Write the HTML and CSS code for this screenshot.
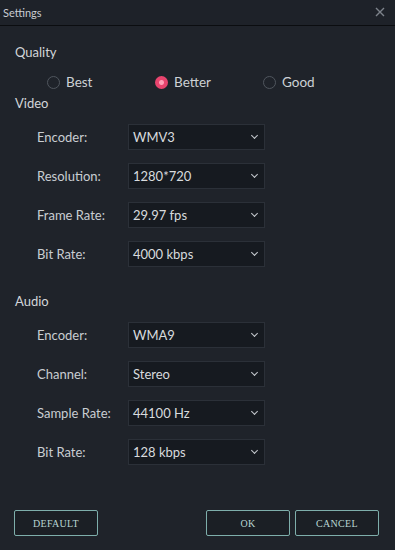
FILE: index.html
```html
<!DOCTYPE html>
<html lang="en">
<head>
  <meta charset="UTF-8" />
  <title>Settings</title>
  <link rel="stylesheet" href="styles.css">
</head>
<body>

  <!-- title bar -->
  <header class="titlebar">
    <span class="title">Settings</span>
    <span class="close">
      <svg width="10" height="10" viewBox="0 0 10 10"><path d="M1 1 L9 9 M9 1 L1 9" stroke="#7d838b" stroke-width="1.4" fill="none"/></svg>
    </span>
  </header>

  <main class="content">
    <div class="section">Quality</div>
    <div class="radios">
      <label class="radio"><span class="dot"></span>Best</label>
      <label class="radio checked"><span class="dot"></span>Better</label>
      <label class="radio"><span class="dot"></span>Good</label>
    </div>

    <div class="section video">Video</div>
    <div class="rows">
      <div class="row"><span class="label">Encoder:</span><div class="select">WMV3<i class="chev"></i></div></div>
      <div class="row"><span class="label">Resolution:</span><div class="select">1280*720<i class="chev"></i></div></div>
      <div class="row"><span class="label">Frame Rate:</span><div class="select">29.97 fps<i class="chev"></i></div></div>
      <div class="row"><span class="label">Bit Rate:</span><div class="select">4000 kbps<i class="chev"></i></div></div>
    </div>

    <div class="section audio">Audio</div>
    <div class="rows">
      <div class="row"><span class="label">Encoder:</span><div class="select">WMA9<i class="chev"></i></div></div>
      <div class="row"><span class="label">Channel:</span><div class="select">Stereo<i class="chev"></i></div></div>
      <div class="row"><span class="label">Sample Rate:</span><div class="select">44100 Hz<i class="chev"></i></div></div>
      <div class="row"><span class="label">Bit Rate:</span><div class="select">128 kbps<i class="chev"></i></div></div>
    </div>
  </main>

  <footer class="actions">
    <button class="btn">DEFAULT</button>
    <div class="right">
      <button class="btn">OK</button>
      <button class="btn">CANCEL</button>
    </div>
  </footer>

</body>
</html>
```

FILE: styles.css
```css
* {
  margin: 0;
  padding: 0;
  box-sizing: border-box;
}

body {
  background: #1f232a;
  font-family: Lato, "Open Sans", sans-serif;
  color: #cdd1d5;
  width: 395px;
  height: 550px;
  overflow: hidden;
}

.titlebar {
  height: 26px;
  display: flex;
  justify-content: space-between;
  align-items: center;
  padding: 0 10px 0 3px;
  border-bottom: 1px solid #0b0d10;
  background: #1e2229;
}

.title {
  font-size: 11px;
  color: #c9cdd2;
}

.close {
  display: flex;
  margin-top: -1px;
}

.content {
  padding: 18px 0 0 15px;
}

.section {
  font-size: 13px;
  line-height: 16px;
  color: #d2d5d9;
}

.radios {
  display: flex;
  margin-top: 14px;
  padding-left: 32px;
}

.radio {
  width: 108px;
  display: flex;
  align-items: center;
  font-size: 13.5px;
  line-height: 16px;
  color: #cdd1d5;
}

.dot {
  width: 13px;
  height: 13px;
  border-radius: 50%;
  border: 1px solid #50565e;
  margin-right: 6px;
}

.radio.checked .dot {
  border: none;
  background: radial-gradient(circle, #ff9fb6 0 2px, #e8446e 3px);
}

.video {
  margin-top: 5px;
}

.audio {
  margin-top: 26px;
}

.rows {
  display: flex;
  flex-direction: column;
  gap: 13px;
  margin-top: 13px;
  padding-left: 22px;
}

.row {
  display: flex;
  align-items: center;
  height: 26px;
}

.label {
  width: 91px;
  font-size: 13px;
  color: #c9cdd2;
}

.select {
  width: 137px;
  height: 26px;
  background: #161a20;
  border: 1px solid #2b3038;
  display: flex;
  align-items: center;
  justify-content: space-between;
  padding: 0 7px 0 4px;
  font-size: 13px;
  color: #d8dbde;
}

.chev {
  width: 5px;
  height: 5px;
  border-right: 1.2px solid #c5c9ce;
  border-bottom: 1.2px solid #c5c9ce;
  transform: rotate(45deg);
  margin-top: -3px;
}

.actions {
  display: flex;
  justify-content: space-between;
  margin-top: 45px;
  padding: 0 16px 0 14px;
}

.right {
  display: flex;
  gap: 5px;
}

.btn {
  width: 84px;
  height: 26px;
  background: #1b1f25;
  border: 1.5px solid #7eaeab;
  border-radius: 2px;
  color: #b9d6d3;
  font-family: "Liberation Serif", serif;
  font-size: 10px;
  letter-spacing: 0.3px;
  cursor: pointer;
}
```
